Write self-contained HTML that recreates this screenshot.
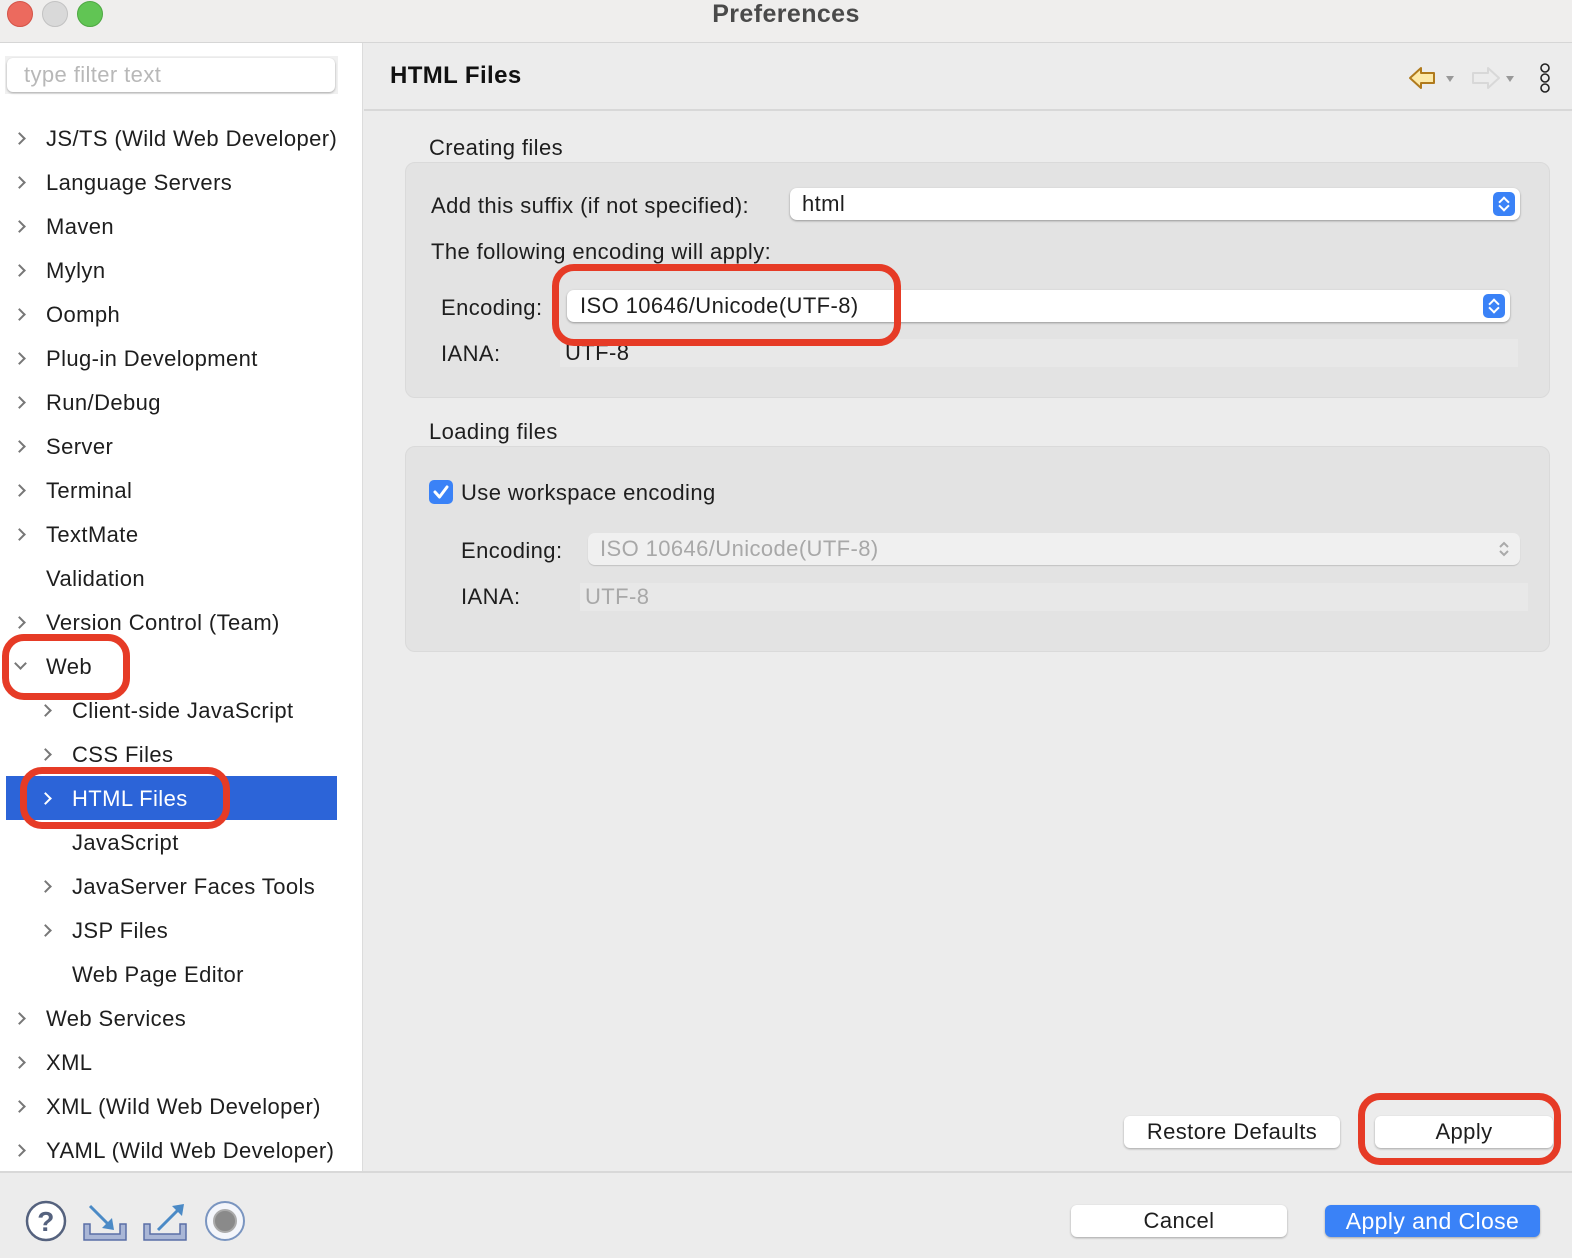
<!DOCTYPE html>
<html><head><meta charset="utf-8"><style>
*{box-sizing:border-box;margin:0;padding:0}
body{width:1572px;height:1258px;position:relative;overflow:hidden;background:#ececec;font-family:"Liberation Sans",sans-serif;color:#1e1e1e;font-size:22px;letter-spacing:0.4px}
.a{position:absolute;white-space:nowrap}
.tb{left:0;top:0;width:1572px;height:43px;background:#efeeed;border-bottom:1px solid #d6d6d6}
.dot{width:26px;height:26px;border-radius:50%;top:1px}
.side{left:0;top:43px;width:363px;height:1129px;background:#fff;border-right:1px solid #dcdcdc}
.it{height:44px;line-height:44px}
.chev{position:absolute;width:9px;height:9px;border-right:2px solid #777;border-bottom:2px solid #777;transform:rotate(-45deg)}
.grp{background:#e3e3e3;border:1px solid #dadada;border-radius:10px}
.combo{background:#fff;border-radius:7px;box-shadow:0 1px 2px rgba(0,0,0,.35);height:32px;line-height:32px}
.step{position:absolute;width:22px;height:24px;background:#3a82f7;border-radius:5px}
.step:before,.step:after{content:"";position:absolute;left:7px;width:6px;height:6px;border-left:2px solid #fff;border-top:2px solid #fff}
.step:before{top:6px;transform:rotate(45deg)}
.step:after{top:10px;transform:rotate(225deg)}
.btn{background:#fff;border-radius:6px;box-shadow:0 1px 2px rgba(0,0,0,.3);height:32px;line-height:32px;text-align:center}
.red{border:7px solid #e63b26;border-radius:22px}
</style></head><body>
<div class="a tb"></div>
<div class="a dot" style="left:7px;background:#ec6a5e;border:1px solid #d45347"></div>
<div class="a dot" style="left:42px;background:#d9d9d9;border:1px solid #c2c2c2"></div>
<div class="a dot" style="left:77px;background:#61c554;border:1px solid #4ea842"></div>
<div class="a" style="left:0;width:1572px;text-align:center;top:0;font-size:25px;font-weight:bold;color:#4a4a4a;line-height:28px">Preferences</div>

<div class="a side"></div>
<div class="a" style="left:5px;top:56px;width:333px;height:38px;background:#f0f0f0"></div>
<div class="a" style="left:7px;top:58px;width:328px;height:34px;background:#fff;border-radius:6px;box-shadow:0 1px 2px rgba(0,0,0,.3);color:#b8b8b8;line-height:34px;padding-left:17px">type filter text</div>

<div class="a" style="left:6px;top:776px;width:331px;height:44px;background:#2c64d8"></div>

<div id="tree"></div>
<script>
var items=[["JS/TS (Wild Web Developer)",0,1],["Language Servers",0,1],["Maven",0,1],["Mylyn",0,1],["Oomph",0,1],["Plug-in Development",0,1],["Run/Debug",0,1],["Server",0,1],["Terminal",0,1],["TextMate",0,1],["Validation",0,0],["Version Control (Team)",0,1],["Web",0,2],["Client-side JavaScript",1,1],["CSS Files",1,1],["HTML Files",1,3],["JavaScript",1,0],["JavaServer Faces Tools",1,1],["JSP Files",1,1],["Web Page Editor",1,0],["Web Services",0,1],["XML",0,1],["XML (Wild Web Developer)",0,1],["YAML (Wild Web Developer)",0,1]];
var h="";items.forEach(function(it,i){var y=117+i*44;var x=it[1]?72:46;var cx=it[1]?41:15;
if(it[2]==1||it[2]==3){var c=it[2]==3?"#fff":"#777";h+='<div class="chev" style="left:'+cx+'px;top:'+(y+17)+'px;border-color:'+c+'"></div>';}
if(it[2]==2){h+='<div class="chev" style="left:'+(cx+1)+'px;top:'+(y+14)+'px;transform:rotate(45deg)"></div>';}
h+='<div class="a it" style="left:'+x+'px;top:'+y+'px;width:'+(338-x)+'px;overflow:hidden;'+(it[2]==3?'color:#fff':'')+'">'+it[0]+'</div>';});
document.getElementById("tree").innerHTML=h;
</script>

<div class="a" style="left:390px;top:62px;font-size:24px;font-weight:bold;color:#111">HTML Files</div>
<div class="a" style="left:364px;top:109px;width:1208px;height:2px;background:#d8d8d8"></div>
<svg class="a" style="left:1405px;top:60px" width="160" height="36" viewBox="0 0 160 36">
<path d="M5 18 L16 8 L16 13 L29 13 L29 23 L16 23 L16 28 Z" fill="#fde9a8" stroke="#b07a1c" stroke-width="2" stroke-linejoin="round"/>
<path d="M41 16 L49 16 L45 22 Z" fill="#999"/>
<path d="M94 18 L83 8 L83 13 L68 13 L68 23 L83 23 L83 28 Z" fill="none" stroke="#d8d8d8" stroke-width="2" stroke-linejoin="round"/>
<path d="M101 16 L109 16 L105 22 Z" fill="#999"/>
<circle cx="140" cy="8" r="4" fill="none" stroke="#222" stroke-width="1.6"/><circle cx="140" cy="18" r="4" fill="none" stroke="#222" stroke-width="1.6"/><circle cx="140" cy="28" r="4" fill="none" stroke="#222" stroke-width="1.6"/>
</svg>

<div class="a" style="left:429px;top:135px">Creating files</div>
<div class="a grp" style="left:405px;top:162px;width:1145px;height:236px"></div>
<div class="a" style="left:431px;top:193px">Add this suffix (if not specified):</div>
<div class="a combo" style="left:790px;top:188px;width:730px;padding-left:12px">html<div class="step" style="right:5px;top:4px"></div></div>
<div class="a" style="left:431px;top:239px">The following encoding will apply:</div>
<div class="a" style="left:441px;top:295px">Encoding:</div>
<div class="a combo" style="left:567px;top:290px;width:943px;padding-left:13px">ISO 10646/Unicode(UTF-8)<div class="step" style="right:5px;top:4px"></div></div>
<div class="a" style="left:441px;top:341px">IANA:</div>
<div class="a" style="left:560px;top:339px;width:958px;height:28px;background:#e8e8e8;line-height:28px;padding-left:5px">UTF-8</div>
<div class="a red" style="left:552px;top:264px;width:349px;height:82px"></div>

<div class="a" style="left:429px;top:419px">Loading files</div>
<div class="a grp" style="left:405px;top:446px;width:1145px;height:206px"></div>
<div class="a" style="left:429px;top:480px;width:24px;height:24px;background:#3a82f7;border-radius:5px"><svg width="24" height="24"><path d="M6 12 L10.5 17 L18 7" fill="none" stroke="#fff" stroke-width="3" stroke-linecap="round" stroke-linejoin="round"/></svg></div>
<div class="a" style="left:461px;top:480px">Use workspace encoding</div>
<div class="a" style="left:461px;top:538px">Encoding:</div>
<div class="a combo" style="left:588px;top:533px;width:932px;padding-left:12px;background:#f0f0f0;color:#a8a8a8;box-shadow:0 1px 1px rgba(0,0,0,.15)">ISO 10646/Unicode(UTF-8)<svg style="position:absolute;right:10px;top:7px" width="12" height="18"><path d="M2 7 L6 3 L10 7 M2 11 L6 15 L10 11" fill="none" stroke="#aaa" stroke-width="2"/></svg></div>
<div class="a" style="left:461px;top:584px">IANA:</div>
<div class="a" style="left:580px;top:583px;width:948px;height:28px;background:#e8e8e8;line-height:28px;padding-left:5px;color:#a8a8a8">UTF-8</div>

<div class="a btn" style="left:1124px;top:1116px;width:216px">Restore Defaults</div>
<div class="a btn" style="left:1375px;top:1116px;width:178px">Apply</div>
<div class="a" style="left:0;top:1171px;width:1572px;height:2px;background:#d8d8d8"></div>
<div class="a btn" style="left:1071px;top:1205px;width:216px">Cancel</div>
<div class="a btn" style="left:1325px;top:1205px;width:215px;background:#3a82f7;color:#fff;font-size:23px">Apply and Close</div>

<svg class="a" style="left:24px;top:1198px" width="230" height="46" viewBox="0 0 230 46">
<circle cx="22" cy="23" r="19" fill="#fff" stroke="#55627e" stroke-width="2.5"/>
<text x="22" y="33" text-anchor="middle" font-family="Liberation Sans" font-weight="bold" font-size="28" fill="#55627e">?</text>
<path d="M60 26 L60 42 L102 42 L102 26 L96 26 L96 36 L66 36 L66 26 Z" fill="#a9b6d6" stroke="#5a6ea6" stroke-width="1.5"/>
<path d="M66 8 L86 28" stroke="#4b8ac6" stroke-width="3"/><path d="M78 30 L90 32 L88 20 Z" fill="#4b8ac6"/>
<path d="M120 26 L120 42 L162 42 L162 26 L156 26 L156 36 L126 36 L126 26 Z" fill="#a9b6d6" stroke="#5a6ea6" stroke-width="1.5"/>
<path d="M134 32 L154 12" stroke="#4b8ac6" stroke-width="3"/><path d="M148 8 L160 6 L158 18 Z" fill="#4b8ac6"/>
<circle cx="201" cy="23" r="19" fill="#f4f6fb" stroke="#7a95c0" stroke-width="2"/>
<circle cx="201" cy="23" r="11" fill="#8a8a8a" stroke="#aaa" stroke-width="2"/>
</svg>

<div class="a red" style="left:2px;top:634px;width:128px;height:66px"></div>
<div class="a red" style="left:20px;top:767px;width:210px;height:62px"></div>
<div class="a red" style="left:1358px;top:1093px;width:203px;height:72px"></div>
</body></html>
